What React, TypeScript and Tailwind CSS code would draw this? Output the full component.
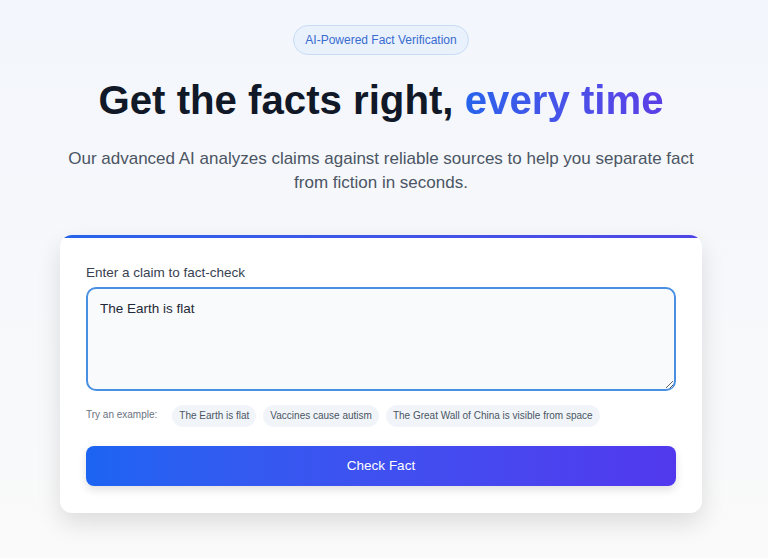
import React, { useState } from "react";

const examples = [
  "The Earth is flat",
  "Vaccines cause autism",
  "The Great Wall of China is visible from space",
];

export default function App() {
  const [claim, setClaim] = useState<string>("The Earth is flat");

  return (
    <div className="min-h-[558px] w-full bg-gradient-to-b from-[#f3f6fc] to-[#fafafa] font-['Liberation_Sans',Arial,sans-serif]">
      <div className="w-[762px] flex flex-col items-center pt-[25px]">
        <div className="rounded-full border border-[#c8dcf8] bg-[#e9f1fd] px-[11px] py-[7px] text-[12px] leading-[14px] text-[#3a6cd0]">
          AI-Powered Fact Verification
        </div>
        <h1 className="mt-[22px] text-[40.2px] leading-[48px] font-bold text-[#111827]">
          Get the facts right,{" "}
          <span className="bg-gradient-to-r from-[#2563eb] to-[#5b3ee6] bg-clip-text text-transparent">
            every time
          </span>
        </h1>
        <p className="mt-[22px] w-[630px] text-center text-[17px] leading-[24px] text-[#4b5563]">
          Our advanced AI analyzes claims against reliable sources to help you separate fact from fiction in seconds.
        </p>

        <div className="mt-[40px] w-[642px] overflow-hidden rounded-xl bg-white shadow-[0_10px_25px_rgba(0,0,0,0.12)]">
          <div className="h-[3px] bg-gradient-to-r from-[#2563eb] to-[#4f46e5]" />
          <div className="px-[26px] pt-[27px] pb-[27px]">
            <label className="block text-[13.5px] leading-[16px] text-[#374151]">
              Enter a claim to fact-check
            </label>
            <textarea
              value={claim}
              onChange={(e) => setClaim(e.target.value)}
              className="mt-[6px] block h-[104px] w-full resize-y rounded-[10px] border-2 border-[#4a90e2] bg-[#f8fafc] px-[12px] py-[10px] text-[13.5px] leading-[20px] text-[#1f2937] outline-none"
            />
            <div className="mt-[14px] flex items-center gap-[7px]">
              <span className="mr-[8px] -mt-[3px] text-[10px] text-[#6b7280]">Try an example:</span>
              {examples.map((ex) => (
                <button
                  key={ex}
                  onClick={() => setClaim(ex)}
                  className="rounded-full bg-[#f1f5f9] px-[7px] py-[4px] text-[10px] leading-[14px] text-[#4b5563]"
                >
                  {ex}
                </button>
              ))}
            </div>
            <button className="mt-[19px] h-[40px] w-full rounded-lg bg-gradient-to-r from-[#1c64f2] to-[#5138ee] text-[13.5px] text-white shadow-[0_4px_8px_rgba(0,0,0,0.12)]">
              Check Fact
            </button>
          </div>
        </div>
      </div>
    </div>
  );
}
